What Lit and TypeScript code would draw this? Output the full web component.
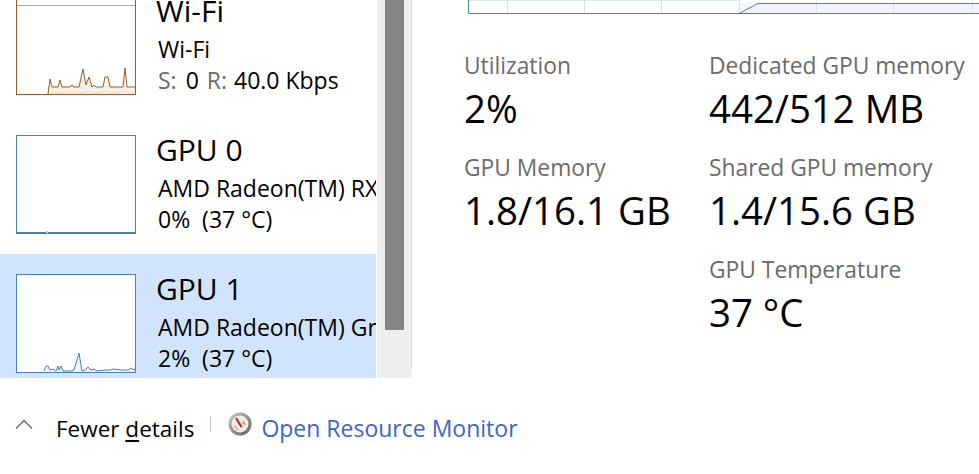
import { LitElement, css, html, svg } from 'lit';
import { customElement } from 'lit/decorators.js';

type Row = {
  title: string;
  sub: string;
  stat?: boolean;
  value: string;
  color: string;
  fill: string;
  line: string;
  selected?: boolean;
};

const wifiPeaks = '31,97 33,82 35,90 41,90 43,83 45,90 53,90 55,88 57,90 62,90 66,72 69,88 72,80 75,90 77,88 79,90 86,90 88,80 91,80 93,90 106,90 108,71 110,90 118,90';
const wifiLow = '33,96 37,95 41,96 47,95 52,96 58,95 62,96 68,95 72,94 76,96 84,95 88,94 92,96 100,95 106,94 112,96 118,95';
const gpu0Peaks = '0,96.5 29,96.5 30,95.5 31,96.5 118,96.5';
const gpu1Peaks = '27,96 29,91 31,91 33,95 36,94 39,96 41,91 42,95 44,91 46,96 49,96 54,96 57,95 62,78 65,96 68,95 71,92 74,95 77,94 80,96 88,95 93,95 96,94 105,95 111,95 114,93 117,95 118,94';

@customElement('app-root')
export class AppRoot extends LitElement {
  static styles = css`
    :host {
      display: block;
      width: 979px;
      height: 474px;
      overflow: hidden;
      background: #fff;
      font-family: 'Open Sans', 'Noto Sans', sans-serif;
      color: #000;
    }
    .top {
      display: flex;
      height: 378px;
    }
    .list {
      width: 376px;
      flex: none;
      display: flex;
      flex-direction: column;
      overflow: hidden;
      border-right: 1px solid #fff;
    }
    .row {
      flex: none;
      display: flex;
      gap: 21px;
      padding-left: 16px;
      box-sizing: border-box;
      white-space: nowrap;
      overflow: hidden;
    }
    .row.wifi {
      height: 124px;
      margin-top: -4px;
    }
    .row.gpu0 {
      height: 134px;
      padding-top: 15px;
    }
    .row.sel {
      height: 124px;
      padding-top: 20px;
      background: #d1e4fd;
    }
    .graph {
      flex: none;
      width: 120px;
      height: 99px;
      box-sizing: border-box;
      border: 1px solid;
      background: #fff;
      display: block;
    }
    .info {
      display: flex;
      flex-direction: column;
      min-width: 0;
    }
    .title {
      font-size: 30px;
      line-height: 36px;
      margin: -3px 0 0 -1px;
    }
    .sub {
      font-size: 23px;
      line-height: 30px;
      margin: 5px 0 0 1px;
    }
    .line {
      font-size: 23px;
      line-height: 30px;
      margin: 1px 0 0 1px;
    }
    .muted {
      color: #6b6b6b;
      margin-right: 3px;
    }
    .muted.r {
      margin: 0 1px 0 2px;
    }
    .track {
      width: 34px;
      flex: none;
      background: #eee;
      display: flex;
      justify-content: center;
      align-items: flex-start;
    }
    .thumb {
      width: 19px;
      height: 330px;
      background: #858585;
    }
    .divider {
      width: 1px;
      height: 369px;
      flex: none;
      background: #dcdcdc;
    }
    .panel {
      flex: 1;
      min-width: 0;
      padding-left: 52px;
    }
    .chart {
      display: block;
      margin: 0 0 38px 4px;
    }
    .stats {
      display: grid;
      grid-template-columns: 245px 1fr;
    }
    .stat {
      height: 102px;
    }
    .label {
      font-size: 22.8px;
      line-height: 28px;
      color: #6b6b6b;
      white-space: nowrap;
    }
    .value {
      font-size: 38.4px;
      line-height: 46px;
      margin-top: 5px;
      white-space: nowrap;
    }
    .footer {
      display: flex;
      align-items: center;
      height: 92px;
      padding: 4px 0 0 15px;
      font-size: 22.5px;
    }
    .chevron {
      display: block;
      width: 18px;
      height: 10px;
      margin: 0 23px 8px 0;
    }
    .fewer u {
      text-underline-offset: 3px;
    }
    .sep {
      width: 1px;
      height: 14px;
      background: #c8c8c8;
      margin: 0 17px 8px 16px;
    }
    .monitor {
      display: block;
      margin: 0 9px 9px 0;
    }
    .link {
      color: #3c67c6;
      font-size: 23px;
    }
  `;

  private rows: Row[] = [
    { title: 'Wi-Fi', sub: 'Wi-Fi', stat: true, value: '40.0 Kbps', color: '#9a5c26', fill: '#f8f1e9', line: wifiPeaks },
    { title: 'GPU 0', sub: 'AMD Radeon(TM) RX 560', value: '0%\u00a0\u00a0(37 °C)', color: '#4a7fb8', fill: '#f0f5fb', line: gpu0Peaks },
    { title: 'GPU 1', sub: 'AMD Radeon(TM) Graphics', value: '2%\u00a0\u00a0(37 °C)', color: '#4a7fb8', fill: '#f0f5fb', line: gpu1Peaks, selected: true },
  ];

  private stats = [
    ['Utilization', '2%'],
    ['Dedicated GPU memory', '442/512 MB'],
    ['GPU Memory', '1.8/16.1 GB'],
    ['Shared GPU memory', '1.4/15.6 GB'],
    ['', ''],
    ['GPU Temperature', '37 °C'],
  ];

  renderGraph(r: Row, i: number) {
    const start = r.line.split(' ')[0].split(',')[0];
    return svg`<svg class="graph" style="border-color:${r.color}" viewBox="0 0 118 97" preserveAspectRatio="none">
      ${i === 0 ? svg`<path d="M0 8.5H118" stroke="#c6a68a" fill="none"/>` : ''}
      <polygon points="${r.line} 118,97 ${start},97" fill="${r.fill}"/>
      ${i === 0 ? svg`<polyline points="${wifiLow}" fill="none" stroke="#ecd9c6"/>` : ''}
      <polyline points="${r.line}" fill="none" stroke="${r.color}"/>
    </svg>`;
  }

  renderRow(r: Row, i: number) {
    const cls = i === 0 ? 'wifi' : r.selected ? 'sel' : 'gpu0';
    return html`
      <div class="row ${cls}">
        ${this.renderGraph(r, i)}
        <div class="info">
          <div class="title">${r.title}</div>
          <div class="sub">${r.sub}</div>
          <div class="line">
            ${r.stat
              ? html`<span class="muted">S:</span> 0 <span class="muted r">R:</span> `
              : ''}${r.value}
          </div>
        </div>
      </div>
    `;
  }

  render() {
    return html`
      <div class="top">
        <div class="list">${this.rows.map((r, i) => this.renderRow(r, i))}</div>
        <div class="track"><div class="thumb"></div></div>
        <div class="divider"></div>
        <div class="panel">
          <svg class="chart" width="511" height="14" viewBox="0 0 511 14">
            <rect x="272" y="3" width="239" height="10" fill="#f1f5fa"/>
            <path d="M0 0.5H271" stroke="#dde8f3" fill="none"/>
            <path d="M39.5 0V13M116.5 0V13M193.5 0V13M271.5 0V13M348.5 0V13M425.5 0V13M504.5 0V13" stroke="#d6e3f0" fill="none"/>
            <path d="M0.5 0V13.5H511" stroke="#4a7fb8" fill="none"/>
            <path d="M272 13L290 3.5H511" stroke="#4a7fb8" fill="none"/>
          </svg>
          <div class="stats">
            ${this.stats.map(
              ([l, v]) => html`<div class="stat">
                <div class="label">${l}</div>
                <div class="value">${v}</div>
              </div>`
            )}
          </div>
        </div>
      </div>
      <div class="footer">
        <svg class="chevron" viewBox="0 0 18 10"><path d="M1 9.5L9 1.5L17 9.5" fill="none" stroke="#666" stroke-width="1.3"/></svg>
        <span class="fewer">Fewer <u>d</u>etails</span>
        <span class="sep"></span>
        <svg class="monitor" width="24" height="24" viewBox="0 0 24 24">
          <defs>
            <linearGradient id="ring" x1="0" y1="0" x2="1" y2="1">
              <stop offset="0" stop-color="#c9c9c6"/>
              <stop offset="1" stop-color="#5e5e5c"/>
            </linearGradient>
          </defs>
          <circle cx="12" cy="12" r="11.5" fill="url(#ring)"/>
          <circle cx="12" cy="12" r="8.5" fill="#f0ece6"/>
          <path d="M8 6L13.5 15" stroke="#b8322a" stroke-width="2.2"/>
          <path d="M15 8L18 13L14.5 12Z" fill="#dd8a44"/>
          <path d="M6 14L10 18" stroke="#c9bfae" stroke-width="2"/>
        </svg>
        <span class="link">Open Resource Monitor</span>
      </div>
    `;
  }
}
